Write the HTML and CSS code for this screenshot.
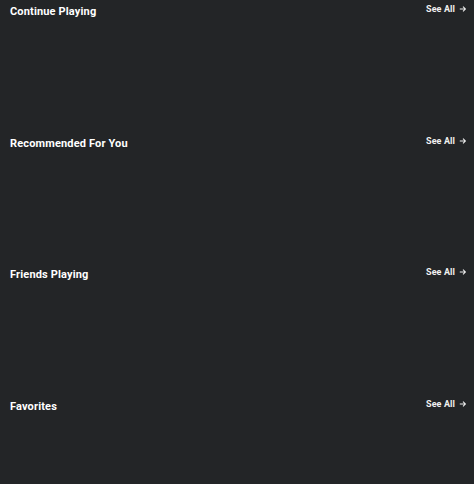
FILE: index.html
```html
<!DOCTYPE html>
<html>
<head>
<meta charset="utf-8">
<link rel="stylesheet" href="styles.css">
</head>
<body>
<main class="page">
  <section class="section">
    <div class="header">
      <h2 class="title">Continue Playing</h2>
      <a class="see-all">See All <svg class="arrow" viewBox="0 0 10 10" width="8" height="8"><path d="M1 5h7M5 2l3 3-3 3" fill="none" stroke="currentColor" stroke-width="1.3"/></svg></a>
    </div>
  </section>
  <section class="section">
    <div class="header">
      <h2 class="title">Recommended For You</h2>
      <a class="see-all">See All <svg class="arrow" viewBox="0 0 10 10" width="8" height="8"><path d="M1 5h7M5 2l3 3-3 3" fill="none" stroke="currentColor" stroke-width="1.3"/></svg></a>
    </div>
  </section>
  <section class="section">
    <div class="header">
      <h2 class="title">Friends Playing</h2>
      <a class="see-all">See All <svg class="arrow" viewBox="0 0 10 10" width="8" height="8"><path d="M1 5h7M5 2l3 3-3 3" fill="none" stroke="currentColor" stroke-width="1.3"/></svg></a>
    </div>
  </section>
  <section class="section last">
    <div class="header">
      <h2 class="title">Favorites</h2>
      <a class="see-all">See All <svg class="arrow" viewBox="0 0 10 10" width="8" height="8"><path d="M1 5h7M5 2l3 3-3 3" fill="none" stroke="currentColor" stroke-width="1.3"/></svg></a>
    </div>
  </section>
</main>
</body>
</html>
```
FILE: styles.css
```css
html, body {
  margin: 0;
  padding: 0;
  background: #232527;
  height: 100%;
}
.page {
  display: flex;
  flex-direction: column;
  font-family: Roboto, "Liberation Sans", sans-serif;
  color: #fff;
}
.section {
  height: 131.5px;
}
.section.last {
  height: auto;
}
.header {
  display: flex;
  justify-content: space-between;
  align-items: flex-start;
  padding: 0 7px 0 10px;
}
.title {
  margin: 4px 0 0;
  font-size: 11px;
  line-height: 16px;
  font-weight: 700;
  letter-spacing: 0.15px;
}
.see-all {
  margin-top: 3px;
  display: flex;
  align-items: center;
  gap: 4px;
  font-size: 9px;
  line-height: 12px;
  font-weight: 700;
  letter-spacing: 0.1px;
  color: #f0f0f0;
}
.arrow {
  display: block;
}
```
